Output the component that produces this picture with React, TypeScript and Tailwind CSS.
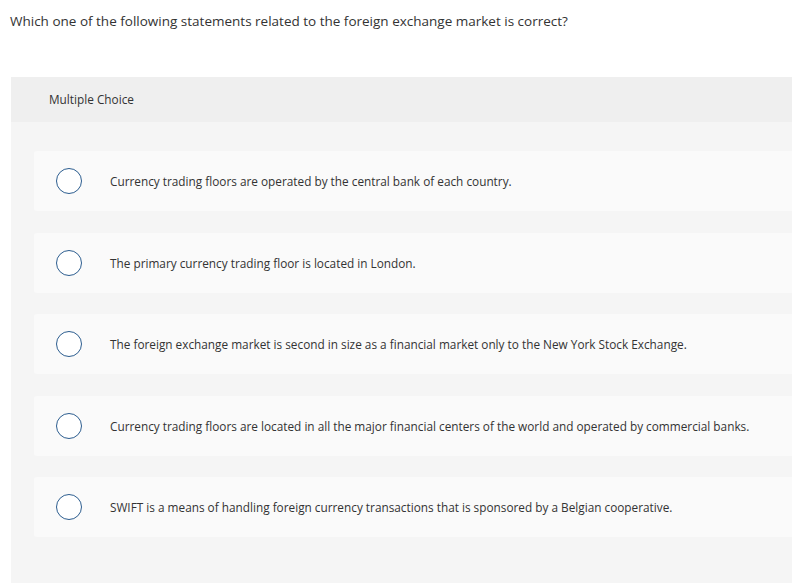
import React from 'react';

const CHOICES: string[] = [
  'Currency trading floors are operated by the central bank of each country.',
  'The primary currency trading floor is located in London.',
  'The foreign exchange market is second in size as a financial market only to the New York Stock Exchange.',
  'Currency trading floors are located in all the major financial centers of the world and operated by commercial banks.',
  'SWIFT is a means of handling foreign currency transactions that is sponsored by a Belgian cooperative.',
];

const Radio: React.FC = () => (
  <span className="w-[26px] h-[26px] rounded-full border-[1.5px] border-[#2c5d8f] bg-white shrink-0" />
);

const App: React.FC = () => {
  return (
    <div className="w-[792px] h-[583px] bg-white overflow-hidden text-[#333] font-['Open_Sans',sans-serif]">
      <p className="pl-[10px] pt-[12px] text-[13.5px] leading-[18px] text-[#333]">
        Which one of the following statements related to the foreign exchange market is correct?
      </p>

      <div className="ml-[11px] mt-[47px] bg-[#f5f5f5] h-[600px]">
        <div className="h-[45px] bg-[#efefef] pl-[38px] flex items-center text-[11.8px] text-[#333]">
          Multiple Choice
        </div>

        <div className="pl-[23px] pt-[29px] flex flex-col gap-[21.5px]">
          {CHOICES.map((c, i) => (
            <div key={i} className="h-[60px] bg-[#fafafa] rounded-l-[3px] flex items-center pl-[22px]">
              <Radio />
              <span className="ml-[28px] text-[11.8px] leading-[16px] text-[#333]">{c}</span>
            </div>
          ))}
        </div>
      </div>
    </div>
  );
};

export default App;
